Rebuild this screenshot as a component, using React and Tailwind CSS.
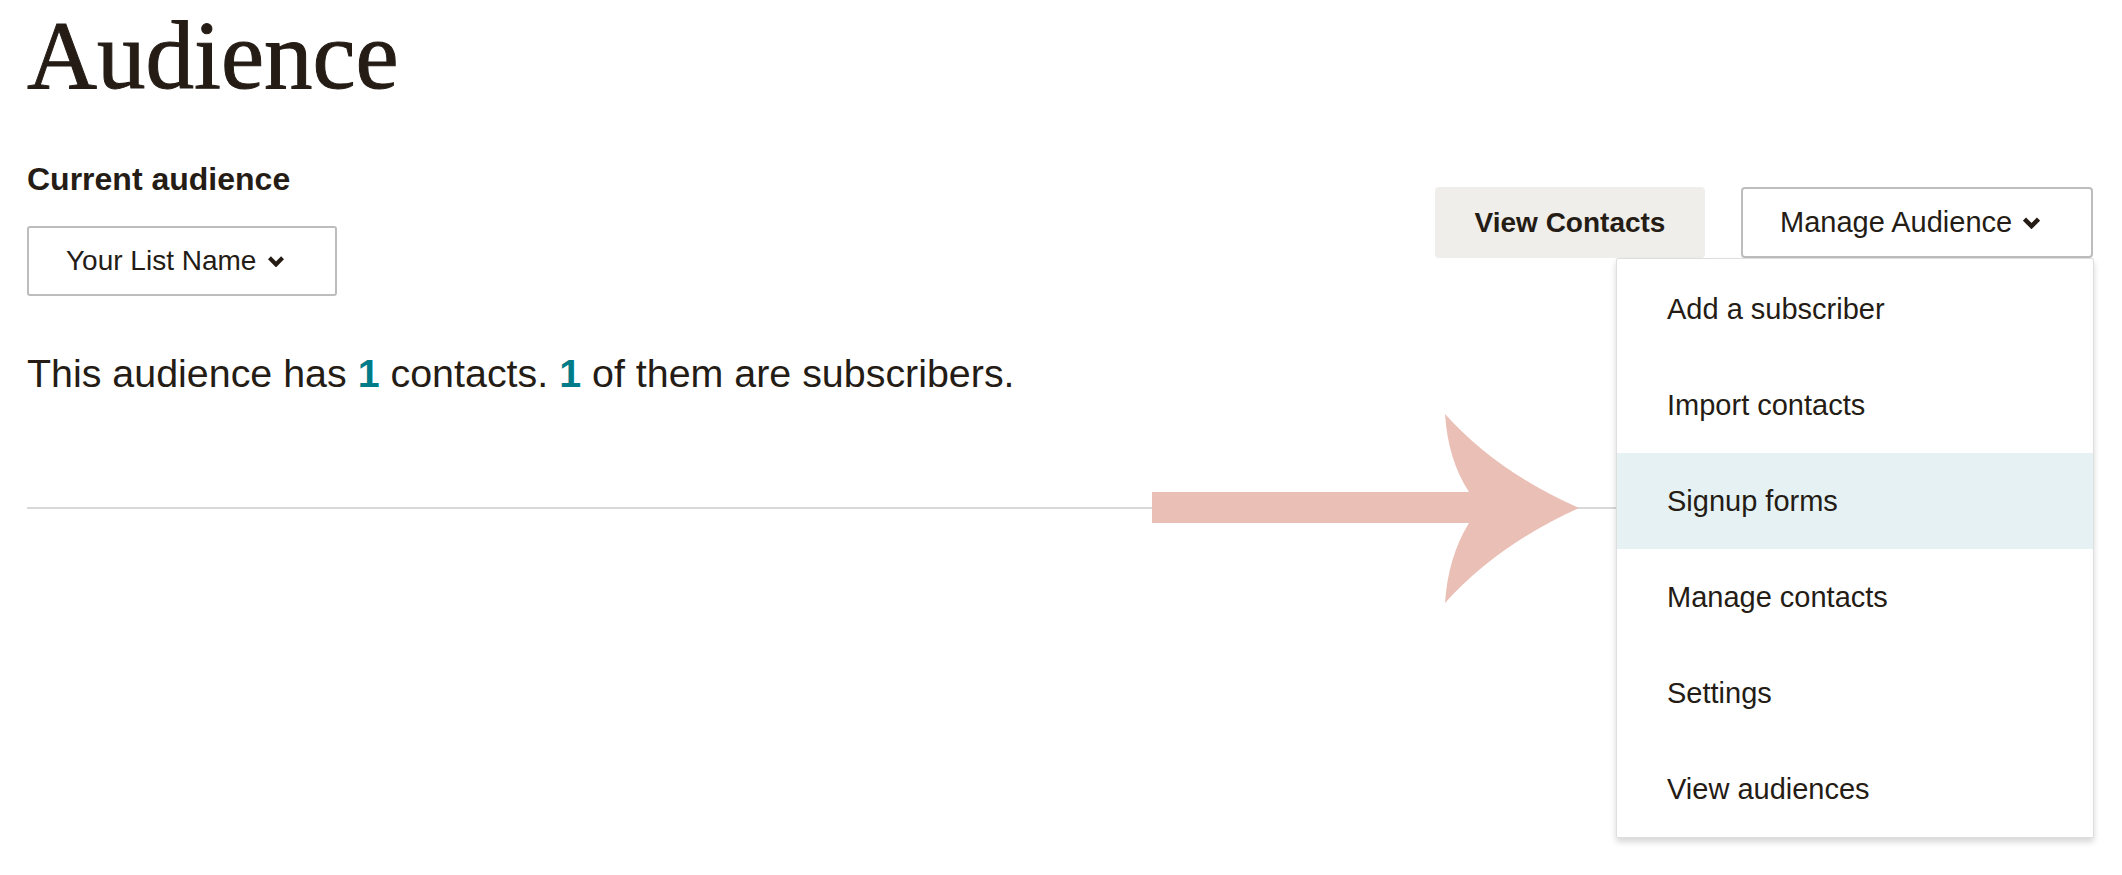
import React from 'react';

const sans = { fontFamily: '"Liberation Sans", Arial, sans-serif' };

const Chevron = ({ className = '' }) => (
    <svg viewBox="0 0 16 11" className={`shrink-0 ${className}`} fill="none">
        <path d="M1.4 1.8 L8 8.4 L14.6 1.8" stroke="#241c15" strokeWidth="4.2" strokeLinejoin="miter" />
    </svg>
);

const App = () => {
    const menu = [
        { id: 1, label: 'Add a subscriber', active: false },
        { id: 2, label: 'Import contacts', active: false },
        { id: 3, label: 'Signup forms', active: true },
        { id: 4, label: 'Manage contacts', active: false },
        { id: 5, label: 'Settings', active: false },
        { id: 6, label: 'View audiences', active: false },
    ];

    return (
        <div className="min-h-screen bg-white text-[#241c15] pl-[27px] pr-[29px]" style={sans}>
            {/* Title */}
            <h1
                className="pt-[7px] text-[97px] leading-none font-normal [-webkit-text-stroke:1px_#241c15]"
                style={{ fontFamily: '"Liberation Serif", "Times New Roman", serif' }}
            >
                Audience
            </h1>

            <div className="flex justify-between items-start mt-[59px]">
                {/* Current audience */}
                <div>
                    <h2 className="text-[32px] leading-none font-bold">Current audience</h2>
                    <button className="mt-[31px] w-[310px] h-[70px] flex items-center gap-[12px] pl-[37px] border-2 border-[#bdbdbd] rounded-[3px] text-[28px] leading-none">
                        <span>Your List Name</span>
                        <Chevron className="w-[16px] h-[11px]" />
                    </button>
                </div>

                {/* Actions */}
                <div className="flex gap-[36px] mt-[24px]">
                    <button className="w-[270px] h-[71px] flex items-center justify-center bg-[#efeeea] rounded-[4px] text-[28px] leading-none font-bold">
                        View Contacts
                    </button>
                    <div className="relative">
                        <button className="w-[352px] h-[71px] flex items-center gap-[11px] pl-[37px] border-2 border-[#bdbdbd] rounded-[4px] text-[29px] leading-none">
                            <span>Manage Audience</span>
                            <Chevron className="w-[17px] h-[12px]" />
                        </button>

                        {/* Dropdown */}
                        <div className="absolute top-full right-[-1px] z-10 w-[478px] pt-[2px] bg-white border border-[#dedede] rounded-[2px] shadow-[0_4px_6px_rgba(0,0,0,0.16)]">
                            {menu.map((item) => (
                                <div
                                    key={item.id}
                                    className={`h-[96px] flex items-center pl-[50px] text-[29px] leading-none ${item.active ? 'bg-[#e5f1f3]' : 'bg-white'}`}
                                >
                                    {item.label}
                                </div>
                            ))}
                        </div>
                    </div>
                </div>
            </div>

            {/* Summary */}
            <p className="mt-[58px] text-[39.4px] leading-none">
                This audience has <span className="font-bold text-[#007c89]">1</span> contacts.{' '}
                <span className="font-bold text-[#007c89]">1</span> of them are subscribers.
            </p>

            {/* Divider + annotation arrow */}
            <div className="relative mt-[114px] h-[2px] bg-[#d9d9d9]">
                <svg
                    className="absolute left-[1113px] top-[-107px] w-[450px] h-[215px]"
                    viewBox="0 0 450 215"
                >
                    <path
                        d="M12 92 L329 92 Q308 60 305 14 Q357 72 439 108 Q357 145 305 203 Q308 157 329 123 L12 123 Z"
                        fill="#eabfb5"
                    />
                </svg>
            </div>
        </div>
    );
};

export default App;
